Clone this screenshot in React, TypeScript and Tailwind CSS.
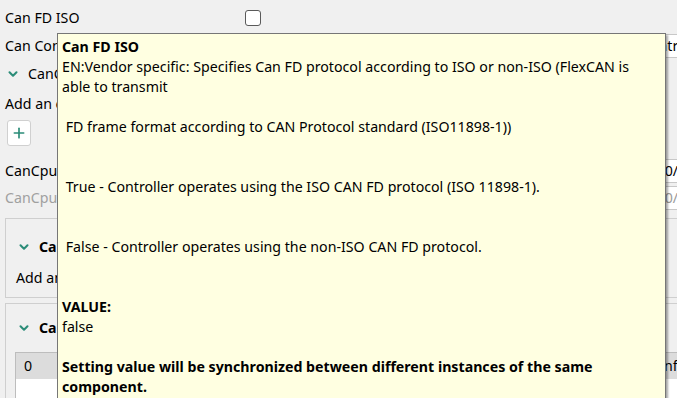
import { ChevronDown, Plus } from 'lucide-react'

const font = "font-['Noto_Sans','Liberation_Sans',sans-serif]"

function Checkbox() {
  return <span className="block h-4 w-4 rounded-[3px] border border-[#5a5a5a] bg-white" />
}

function Chevron() {
  return <ChevronDown className="h-3.5 w-3.5 text-[#2b8c78]" strokeWidth={3.5} />
}

function FieldRow({ label, value, muted }: { label: string; value: string; muted?: boolean }) {
  return (
    <div className="flex h-[26px] items-center">
      <span className={`w-[641px] shrink-0 pl-[5px] ${muted ? 'text-[#a0a0a0]' : 'text-black'}`}>{label}</span>
      <div className="flex h-[24px] w-[200px] shrink-0 items-center border border-[#c8c8c8] bg-white pl-1">
        <span className={`whitespace-nowrap ${muted ? 'text-[#9a9a9a]' : 'text-black'}`}>{value}</span>
      </div>
    </div>
  )
}

export default function App() {
  return (
    <div className={`relative h-[398px] w-[677px] overflow-hidden bg-[#f0f0f0] text-[14.2px] text-black ${font}`}>
      <div className="-mt-[22px] flex flex-col">
        <div className="flex h-[26px] items-center">
          <span className="w-[245px] shrink-0 pl-[5px]">Can Loopback Mode Enabling</span>
          <Checkbox />
        </div>
        <div className="flex h-[28px] items-center">
          <span className="w-[245px] shrink-0 pl-[5px]">Can FD ISO</span>
          <Checkbox />
        </div>
        <div className="flex h-[28px] items-center">
          <span className="w-[636px] shrink-0 pl-[5px]">Can Controller Reference</span>
          <div className="flex h-[24px] w-[200px] shrink-0 items-center border border-[#c8c8c8] bg-white pl-1">
            <span className="whitespace-nowrap">Controller_0</span>
          </div>
        </div>
        <div className="flex h-[28px] items-center gap-[8px] pl-[6px]">
          <Chevron />
          <span>CanController Baudrate Config</span>
        </div>
        <div className="flex h-[30px] items-center pl-[5px] pt-[2px]">Add an element</div>
        <div className="pl-[7px] pt-[2px]">
          <button className="flex h-[26px] w-[24px] items-center justify-center rounded-[3px] border border-[#d0d0d0] bg-white">
            <Plus className="h-4 w-4 text-[#2b8c78]" strokeWidth={2.5} />
          </button>
        </div>
        <div className="mt-[12px] flex flex-col gap-[1px]">
          <FieldRow label="CanCpuClockRef" value="ig_0/McuClockReferencePoint" />
          <FieldRow label="CanCpuClockRefAlternate" value="ig_0/McuClockReferencePoint" muted />
        </div>
        <div className="mx-[5px] mt-[7px] flex h-[80px] w-[700px] flex-col border border-[#cfcfcf]">
          <div className="flex h-[38px] items-center gap-[8px] pl-[11px] pt-[18px] font-bold">
            <Chevron />
            <span>CanRxFiFo</span>
          </div>
          <div className="flex h-[34px] items-center pl-[10px] pt-[8px]">Add an element</div>
        </div>
        <div className="mx-[5px] mt-[5px] flex h-[120px] w-[700px] flex-col border border-[#cfcfcf]">
          <div className="flex h-[40px] items-center gap-[8px] pl-[11px] pt-[8px] font-bold">
            <Chevron />
            <span>CanIdTableConfig</span>
          </div>
          <div className="ml-[9px] mt-[8px] border border-[#bdbdbd] bg-white">
            <div className="flex h-[26px] items-center bg-[#dcdcdc] pl-[8px]">
              <span className="w-[640px] shrink-0">0</span>
              <span className="whitespace-nowrap">nfig_0</span>
            </div>
            <div className="h-[20px]" />
          </div>
        </div>
      </div>

      <div className="absolute left-[57px] top-[33px] h-[380px] w-[609px] border border-[#767676] bg-[#ffffe1] px-[4px] pt-[3px] leading-[20px] shadow-[2px_2px_2px_rgba(0,0,0,0.35)]">
        <p className="whitespace-nowrap font-bold">Can FD ISO</p>
        <p className="whitespace-nowrap">EN:Vendor specific: Specifies Can FD protocol according to ISO or non-ISO (FlexCAN is</p>
        <p className="whitespace-nowrap">able to transmit</p>
        <p className="h-[20px]" />
        <p className="whitespace-pre"> FD frame format according to CAN Protocol standard (ISO11898-1))</p>
        <p className="h-[40px]" />
        <p className="whitespace-pre"> True - Controller operates using the ISO CAN FD protocol (ISO 11898-1).</p>
        <p className="h-[40px]" />
        <p className="whitespace-pre"> False - Controller operates using the non-ISO CAN FD protocol.</p>
        <p className="h-[40px]" />
        <p className="font-bold">VALUE:</p>
        <p>false</p>
        <p className="h-[20px]" />
        <p className="whitespace-nowrap font-bold">Setting value will be synchronized between different instances of the same</p>
        <p className="font-bold">component.</p>
      </div>
    </div>
  )
}
